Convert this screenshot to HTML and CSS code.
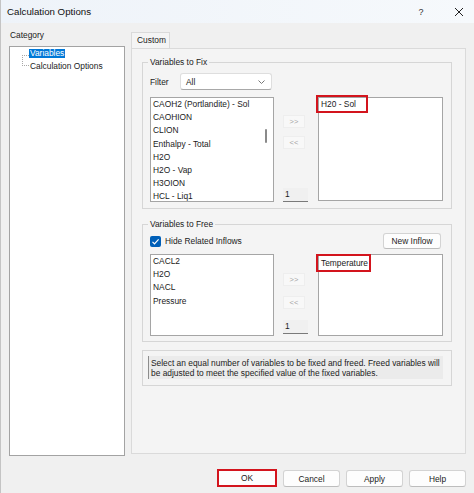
FILE: index.html
```html
<!DOCTYPE html>
<html lang="en">
<head>
    <meta charset="UTF-8">
    <meta name="viewport" content="width=device-width, initial-scale=1.0">
    <title>Calculation Options</title>
    <link rel="stylesheet" href="styles.css">
</head>
<body>
    <div class="window">
        <div class="titlebar">
            <span class="title">Calculation Options</span>
            <span class="help">?</span>
            <span class="close">
                <svg width="10" height="10" viewBox="0 0 10 10"><path d="M1 1L9 9M9 1L1 9" stroke="#222" stroke-width="1"/></svg>
            </span>
        </div>

        <div class="main">
            <div class="category">
                <div class="caption">Category</div>
                <div class="tree">
                    <div class="bracket"></div>
                    <div class="nodes">
                        <div class="node"><span class="selected">Variables</span></div>
                        <div class="node">Calculation Options</div>
                    </div>
                </div>
            </div>

            <div class="tabs">
                <div class="tab">Custom</div>
                <div class="panel">
                    <fieldset class="group group-fix">
                        <legend>Variables to Fix</legend>
                        <div class="filter-row">
                            <span class="filter-label">Filter</span>
                            <div class="combo">
                                <span>All</span>
                                <svg width="7" height="4" viewBox="0 0 7 4"><path d="M0.5 0.5L3.5 3.5L6.5 0.5" fill="none" stroke="#777" stroke-width="1"/></svg>
                            </div>
                        </div>
                        <div class="pick">
                            <div class="list list-left">
                                <div class="item">CAOH2 (Portlandite) - Sol</div>
                                <div class="item">CAOHION</div>
                                <div class="item">CLION</div>
                                <div class="item">Enthalpy - Total</div>
                                <div class="item">H2O</div>
                                <div class="item">H2O - Vap</div>
                                <div class="item">H3OION</div>
                                <div class="item">HCL - Liq1</div>
                                <div class="thumb"></div>
                            </div>
                            <div class="mid">
                                <button class="move">&gt;&gt;</button>
                                <button class="move">&lt;&lt;</button>
                                <span class="count">1</span>
                            </div>
                            <div class="list list-right">
                                <div class="item"><span class="mark">H20 - Sol</span></div>
                            </div>
                        </div>
                    </fieldset>

                    <fieldset class="group group-free">
                        <legend>Variables to Free</legend>
                        <div class="check-row">
                            <span class="checkbox">
                                <svg width="11" height="11" viewBox="0 0 11 11"><path d="M2.5 5.8L4.5 7.8L8.6 3.4" fill="none" stroke="#fff" stroke-width="1.2"/></svg>
                            </span>
                            <span class="check-label">Hide Related Inflows</span>
                            <button class="btn new-inflow">New Inflow</button>
                        </div>
                        <div class="pick">
                            <div class="list list-left">
                                <div class="item">CACL2</div>
                                <div class="item">H2O</div>
                                <div class="item">NACL</div>
                                <div class="item">Pressure</div>
                            </div>
                            <div class="mid">
                                <button class="move">&gt;&gt;</button>
                                <button class="move">&lt;&lt;</button>
                                <span class="count">1</span>
                            </div>
                            <div class="list list-right">
                                <div class="item"><span class="mark mark-wide">Temperature</span></div>
                            </div>
                        </div>
                    </fieldset>

                    <div class="info">
                        <p>Select an equal number of variables to be fixed and freed. Freed variables will be adjusted to meet the specified value of the fixed variables.</p>
                    </div>
                </div>
            </div>
        </div>

        <div class="buttons">
            <button class="btn ok">OK</button>
            <button class="btn">Cancel</button>
            <button class="btn">Apply</button>
            <button class="btn">Help</button>
        </div>
    </div>
</body>
</html>
```

FILE: styles.css
```css
body {
    margin: 0;
    background: #f0f0f0;
    font-family: "Liberation Sans", Arial, sans-serif;
    font-size: 8.4px;
    color: #1b1b1b;
}

.window {
    width: 474px;
    height: 493px;
    box-sizing: border-box;
    background: #f0f0f0;
    border-left: 1px solid #c4c4c4;
    overflow: hidden;
}

/* title bar */
.titlebar {
    height: 23px;
    display: flex;
    align-items: center;
    padding-left: 6px;
    background: linear-gradient(to right, #eef3f9, #f6f9fc);
    font-size: 9.7px;
    color: #111;
}
.title {
    flex: 1;
}
.help {
    width: 26px;
    text-align: center;
    font-size: 9px;
    color: #333;
}
.close {
    width: 30px;
    margin-left: 10px;
    display: flex;
    justify-content: center;
}

.main {
    display: flex;
    padding: 6px 8px 0 8px;
}

/* category tree */
.category {
    width: 116px;
}
.caption {
    line-height: 12px;
    margin-bottom: 5px;
    padding-left: 1px;
}
.tree {
    height: 410px;
    box-sizing: border-box;
    border: 1px solid #a3a3a3;
    background: #fff;
    display: flex;
    padding-left: 12px;
}
.bracket {
    width: 6px;
    height: 9px;
    margin-top: 8px;
    border: 1px dotted #a8a8a8;
    border-right: none;
}
.node {
    height: 13px;
    line-height: 13px;
    padding-left: 1px;
}
.node:first-child {
    padding-left: 0;
}
.selected {
    background: #0078d7;
    color: #fff;
    padding: 0 1px;
    line-height: 9px;
    display: inline-block;
}

/* tab control */
.tabs {
    width: 335px;
    margin-left: 6px;
    margin-top: 3px;
}
.tab {
    display: inline-block;
    width: 39px;
    height: 16px;
    box-sizing: border-box;
    line-height: 15px;
    padding-left: 5px;
    background: #f4f4f4;
    border: 1px solid #dadada;
    border-bottom: none;
}
.panel {
    height: 406px;
    box-sizing: border-box;
    background: #f4f4f4;
    border: 1px solid #dadada;
    padding: 7px 13px 0 10px;
}

/* group boxes */
.group {
    margin: 0;
    border: 1px solid #d6d6d6;
    padding: 5px 8px 6px 7px;
    min-width: 0;
}
.group legend {
    padding: 0 2px;
    margin-left: -2px;
    line-height: 12px;
}
.group-free {
    margin-top: 9px;
    padding-top: 3px;
    padding-bottom: 5px;
}

.filter-row {
    display: flex;
    align-items: center;
    height: 17px;
}
.filter-label {
    width: 30px;
}
.combo {
    width: 92px;
    height: 17px;
    box-sizing: border-box;
    display: flex;
    align-items: center;
    justify-content: space-between;
    padding: 0 6px 0 5px;
    background: #fff;
    border: 1px solid #dedede;
    border-bottom-color: #a8a8a8;
    border-radius: 3px;
}

.pick {
    display: flex;
    margin-top: 7px;
}
.list {
    position: relative;
    box-sizing: border-box;
    width: 125px;
    height: 105px;
    background: #fff;
    border: 1px solid #a5a5a5;
    padding-left: 2px;
}
.list-right {
    width: 126px;
    height: 104px;
}
.item {
    line-height: 13.2px;
}
.thumb {
    position: absolute;
    top: 31px;
    right: 6px;
    width: 2px;
    height: 14px;
    border-radius: 1px;
    background: #8a8a8a;
}

.mid {
    width: 25px;
    margin: 0 10px 0 9px;
    display: flex;
    flex-direction: column;
    align-items: flex-start;
}
.move {
    width: 22px;
    height: 13px;
    padding: 0;
    margin-top: 18px;
    border: 1px solid #eeeeee;
    background: #f8f8f8;
    color: #a5a5a5;
    font-family: inherit;
    font-size: 7.5px;
    line-height: 11px;
}
.move + .move {
    margin-top: 8px;
}
.count {
    margin-top: auto;
    width: 25px;
    height: 14px;
    box-sizing: border-box;
    line-height: 13px;
    padding-left: 2px;
    background: #f0f0f0;
    border-bottom: 1px solid #7a7a7a;
}

/* red call-outs around the chosen entries */
.mark {
    display: inline-block;
    border: 2px solid #d3141d;
    padding: 2px 10px 1px 3px;
    margin: -3px 0 0 -5px;
    line-height: 11px;
}
.mark-wide {
    padding-right: 1px;
    margin-top: -1px;
}

.check-row {
    display: flex;
    align-items: center;
    height: 16px;
}
.checkbox {
    width: 11px;
    height: 11px;
    border-radius: 2px;
    background: #005fb8;
    display: flex;
}
.check-label {
    margin-left: 4px;
}

.btn {
    height: 17px;
    width: 57px;
    padding: 0;
    box-sizing: border-box;
    background: #fdfdfd;
    border: 1px solid #d3d3d3;
    border-bottom-color: #bdbdbd;
    border-radius: 3px;
    font-family: inherit;
    font-size: 8.4px;
    color: #1b1b1b;
}
.new-inflow {
    margin-left: auto;
    margin-right: 2px;
    width: 58px;
    height: 16px;
}
.group-free .pick {
    margin-top: 5px;
}
.group-free .list {
    height: 82px;
}
.group-free .move {
    margin-top: 19px;
}
.group-free .move + .move {
    margin-top: 10px;
}
.group-free .count {
    margin-bottom: 2px;
}

.info {
    margin-top: 8px;
    border: 1px solid #d6d6d6;
    padding: 5px 8px 6px 5px;
}
.info p {
    margin: 0;
    padding: 2px 2px 1px 2px;
    line-height: 10px;
    background: #ebebeb;
    border-left: 1px solid #8d8d8d;
}

/* dialog buttons */
.buttons {
    display: flex;
    justify-content: flex-end;
    gap: 6px;
    margin-top: 14px;
    padding-right: 8px;
}
.buttons .ok {
    width: 60px;
    height: 18px;
    border: 2px solid #d3141d;
    border-radius: 0;
    margin-top: -1px;
}
```
